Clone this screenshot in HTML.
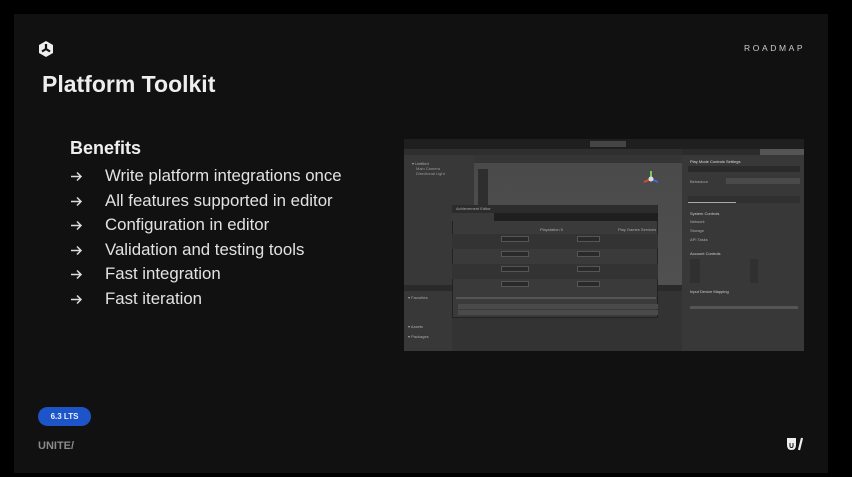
<!DOCTYPE html>
<html><head><meta charset="utf-8"><style>
*{margin:0;padding:0;box-sizing:border-box}
body{width:852px;height:477px;background:#000;position:relative;overflow:hidden;font-family:"Liberation Sans",sans-serif}
.slide{position:absolute;left:14px;top:14px;width:814px;height:459px;background:#111}
.a{position:absolute}
.t{position:absolute;color:#e6e6e6;white-space:nowrap}
.li{position:absolute;left:70px;font-size:16.8px;color:#e2e2e2;white-space:nowrap}
.li svg{position:absolute;left:0;top:5px}
.li span{position:absolute;left:35px}
.tx{position:absolute;font-size:4px;color:#aaa;white-space:nowrap}
.fld{position:absolute;background:#2a2a2a;border:1px solid #555;height:6px}
</style></head><body>
<div class="slide"></div>
<svg class="a" style="left:37px;top:40px" width="18" height="18" viewBox="0 0 18 18"><path d="M9 1 L16 5 L16 13 L9 17 L2 13 L2 5 Z" fill="#eee"/><path d="M9 9 L9 4 M9 9 L5 11.5 M9 9 L13 11.5" stroke="#111" stroke-width="2.2" fill="none"/></svg>
<div class="t" style="left:42px;top:71px;font-size:23px;font-weight:bold;color:#eee">Platform Toolkit</div>
<div class="t" style="left:744px;top:43px;font-size:8.5px;letter-spacing:2.6px;color:#ccc">ROADMAP</div>
<div class="t" style="left:70px;top:138px;font-size:18px;font-weight:bold;color:#eee">Benefits</div>
<div class="li" style="top:166px"><svg width="13" height="11"><path d="M1 5.5H11M7 1.5L11 5.5L7 9.5" stroke="#ddd" stroke-width="1.5" fill="none"/></svg><span>Write platform integrations once</span></div>
<div class="li" style="top:191px"><svg width="13" height="11"><path d="M1 5.5H11M7 1.5L11 5.5L7 9.5" stroke="#ddd" stroke-width="1.5" fill="none"/></svg><span>All features supported in editor</span></div>
<div class="li" style="top:215px"><svg width="13" height="11"><path d="M1 5.5H11M7 1.5L11 5.5L7 9.5" stroke="#ddd" stroke-width="1.5" fill="none"/></svg><span>Configuration in editor</span></div>
<div class="li" style="top:240px"><svg width="13" height="11"><path d="M1 5.5H11M7 1.5L11 5.5L7 9.5" stroke="#ddd" stroke-width="1.5" fill="none"/></svg><span>Validation and testing tools</span></div>
<div class="li" style="top:264px"><svg width="13" height="11"><path d="M1 5.5H11M7 1.5L11 5.5L7 9.5" stroke="#ddd" stroke-width="1.5" fill="none"/></svg><span>Fast integration</span></div>
<div class="li" style="top:289px"><svg width="13" height="11"><path d="M1 5.5H11M7 1.5L11 5.5L7 9.5" stroke="#ddd" stroke-width="1.5" fill="none"/></svg><span>Fast iteration</span></div>

<div class="a" style="left:404px;top:139px;width:400px;height:212px;background:#2b2b2b;overflow:hidden">
 <div class="a" style="left:0;top:0;width:400px;height:10px;background:#1f1f1f"></div>
 <div class="a" style="left:186px;top:2px;width:36px;height:6px;background:#444"></div>
 <div class="a" style="left:0;top:10px;width:70px;height:136px;background:#383838"></div>
 <div class="a" style="left:0;top:10px;width:70px;height:6px;background:#2f2f2f"></div>
 <div class="tx" style="left:8px;top:22px">▾ Untitled</div>
 <div class="tx" style="left:12px;top:27px;color:#999">Main Camera</div>
 <div class="tx" style="left:12px;top:32px;color:#999">Directional Light</div>
 <div class="a" style="left:70px;top:10px;width:208px;height:6px;background:#2f2f2f"></div>
 <div class="a" style="left:70px;top:16px;width:208px;height:8px;background:#353535"></div>
 <div class="a" style="left:70px;top:24px;width:208px;height:122px;background:linear-gradient(#4a4a4a,#505050)"></div>
 <div class="a" style="left:74px;top:30px;width:10px;height:40px;background:#2e2e2e"></div>
 <svg class="a" style="left:237px;top:30px" width="20" height="20"><line x1="10" y1="2" x2="10" y2="10" stroke="#7c5" stroke-width="2"/><line x1="10" y1="10" x2="3" y2="13" stroke="#d44" stroke-width="2"/><line x1="10" y1="10" x2="17" y2="13" stroke="#46d" stroke-width="2"/><circle cx="10" cy="10" r="2.5" fill="#ddd"/></svg>
 <div class="a" style="left:278px;top:10px;width:122px;height:202px;background:#383838"></div>
 <div class="a" style="left:278px;top:10px;width:122px;height:6px;background:#2b2b2b"></div>
 <div class="a" style="left:356px;top:10px;width:44px;height:6px;background:#555"></div>
 <div class="tx" style="left:286px;top:20px;color:#ddd">Play Mode Controls Settings</div>
 <div class="a" style="left:284px;top:27px;width:112px;height:6px;background:#2a2a2a"></div>
 <div class="tx" style="left:286px;top:40px">Behaviour</div>
 <div class="a" style="left:322px;top:39px;width:74px;height:6px;background:#4a4a4a"></div>
 <div class="a" style="left:284px;top:57px;width:112px;height:7px;background:#303030"></div>
 <div class="a" style="left:284px;top:63px;width:48px;height:1px;background:#aaa"></div>
 <div class="tx" style="left:286px;top:72px;color:#ccc">System Controls</div>
 <div class="tx" style="left:286px;top:80px">Network</div>
 <div class="tx" style="left:286px;top:89px">Storage</div>
 <div class="tx" style="left:286px;top:98px">API Tasks</div>
 <div class="tx" style="left:286px;top:112px;color:#ccc">Account Controls</div>
 <div class="a" style="left:286px;top:120px;width:10px;height:24px;background:#303030"></div>
 <div class="a" style="left:346px;top:120px;width:8px;height:24px;background:#303030"></div>
 <div class="tx" style="left:286px;top:150px;color:#ccc">Input Device Mapping</div>
 <div class="a" style="left:286px;top:167px;width:108px;height:3px;background:#555"></div>
 <div class="a" style="left:0;top:146px;width:278px;height:66px;background:#333"></div>
 <div class="a" style="left:0;top:146px;width:48px;height:66px;background:#383838"></div>
 <div class="a" style="left:0;top:146px;width:278px;height:6px;background:#2a2a2a"></div>
 <div class="tx" style="left:4px;top:156px">▾ Favorites</div>
 <div class="tx" style="left:4px;top:185px">▾ Assets</div>
 <div class="tx" style="left:4px;top:195px">▾ Packages</div>
 <div class="a" style="left:48px;top:66px;width:206px;height:113px;background:#3a3a3a;border:1px solid #222"></div>
 <div class="a" style="left:48px;top:66px;width:206px;height:8px;background:#2c2c2c"></div>
 <div class="a" style="left:48px;top:74px;width:206px;height:8px;background:#1f1f1f"></div>
 <div class="a" style="left:48px;top:74px;width:42px;height:8px;background:#3a3a3a"></div>
 <div class="tx" style="left:52px;top:67px">Achievement Editor</div>
 <div class="tx" style="left:136px;top:88px">Playstation 5</div>
 <div class="tx" style="left:214px;top:88px">Play Games Services</div>
 <div class="a" style="left:48px;top:95px;width:206px;height:15px;background:#333"></div>
 <div class="a" style="left:48px;top:125px;width:206px;height:15px;background:#333"></div>
 <div class="fld" style="left:97px;top:97px;width:28px"></div><div class="fld" style="left:173px;top:97px;width:23px"></div>
 <div class="fld" style="left:97px;top:112px;width:28px"></div><div class="fld" style="left:173px;top:112px;width:23px"></div>
 <div class="fld" style="left:97px;top:127px;width:28px"></div><div class="fld" style="left:173px;top:127px;width:23px"></div>
 <div class="fld" style="left:97px;top:142px;width:28px"></div><div class="fld" style="left:173px;top:142px;width:23px"></div>
 <div class="a" style="left:52px;top:158px;width:200px;height:2px;background:#555"></div>
 <div class="a" style="left:54px;top:165px;width:200px;height:5px;background:#4a4a4a"></div>
 <div class="a" style="left:54px;top:171px;width:200px;height:5px;background:#4a4a4a"></div>
</div>

<div class="a" style="left:38px;top:407px;width:53px;height:19px;border-radius:10px;background:#1d55c9;color:#e8eefc;font-size:8px;font-weight:bold;text-align:center;line-height:19px">6.3 LTS</div>
<div class="t" style="left:38px;top:440px;font-size:11px;font-weight:bold;color:#8a8a8a">UNITE/</div>
<svg class="a" style="left:786px;top:437px" width="18" height="14"><path d="M1 1 H10 V8 Q10 13 5.5 13 Q1 13 1 8 Z" fill="#eee"/><path d="M4 6 V9 Q4 10.5 5.5 10.5 Q7 10.5 7 9 V6" stroke="#111" stroke-width="1" fill="none"/><path d="M13 13 L16 1" stroke="#eee" stroke-width="2.2"/></svg>
</body></html>
